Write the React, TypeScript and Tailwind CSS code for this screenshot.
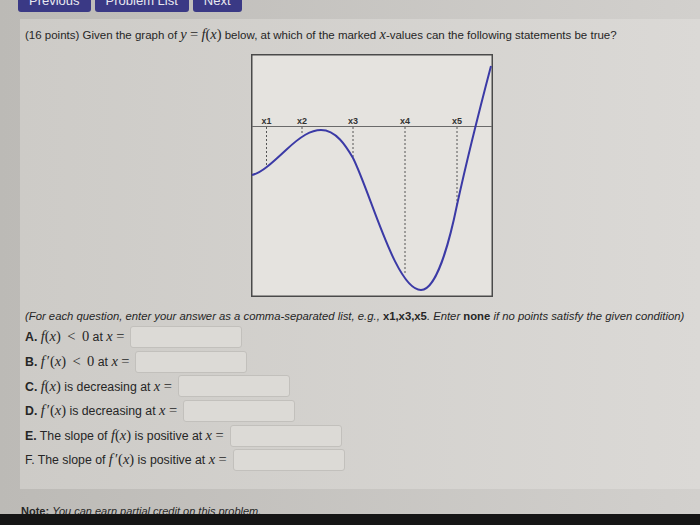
import React from 'react';

const M: React.FC<{ children: React.ReactNode }> = ({ children }) => (
  <span className="font-['Liberation_Serif',serif] italic text-[14.5px]">{children}</span>
);

const R: React.FC<{ children: React.ReactNode }> = ({ children }) => (
  <span className="font-['Liberation_Serif',serif] text-[14.5px]">{children}</span>
);

const Prime: React.FC = () => (
  <span className="ml-[2px] font-['Liberation_Serif',serif] text-[14.5px]">′</span>
);

const Lt: React.FC = () => (
  <span className="mx-[3px] font-['Liberation_Serif',serif] text-[14.5px]">&lt;</span>
);

const AnswerBox: React.FC = () => (
  <input
    type="text"
    className="ml-[6px] h-[22px] w-[112px] rounded-[3px] border border-[#c2c0bc] bg-[#dcdad6] outline-none"
  />
);

const Graph: React.FC = () => {
  const marks = [
    { label: 'x1', x: 15.5, y: 113 },
    { label: 'x2', x: 51, y: 81 },
    { label: 'x3', x: 102, y: 104 },
    { label: 'x4', x: 154, y: 221 },
    { label: 'x5', x: 206, y: 151 },
  ];
  return (
    <svg width="242" height="243" viewBox="0 0 242 243" className="block">
      <rect x="0.75" y="0.75" width="240.5" height="241.5" fill="#e5e3df" stroke="#4a4a4a" strokeWidth="1.5" />
      <line x1="1" y1="72.5" x2="241" y2="72.5" stroke="#6a6a6a" strokeWidth="1" />
      {marks.map((m) => (
        <g key={m.label}>
          <line x1={m.x} y1="73" x2={m.x} y2={m.y} stroke="#555" strokeWidth="1" strokeDasharray="2 2" />
          <text
            x={m.x}
            y="69.5"
            textAnchor="middle"
            fontSize="9"
            fontWeight="bold"
            fontFamily="'Liberation Sans', sans-serif"
            fill="#333"
          >
            {m.label}
          </text>
        </g>
      ))}
      <path
        d="M1 121 C10 119, 20 110, 35 96 C50 82, 60 76, 70 76 C85 76, 95 92, 102 104 C120 140, 145 236, 170 236 C185 236, 198 190, 206 151 C215 110, 230 50, 240 12"
        fill="none"
        stroke="#3b3aa6"
        strokeWidth="2"
      />
    </svg>
  );
};

export default function App() {
  const rows: { key: string; label: React.ReactNode }[] = [
    {
      key: 'A',
      label: (
        <>
          <b>A.</b> <M>f</M><R>(</R><M>x</M><R>)</R> <Lt /> <R>0</R> at <M>x</M> <R>=</R>
        </>
      ),
    },
    {
      key: 'B',
      label: (
        <>
          <b>B.</b> <M>f</M><Prime /><R>(</R><M>x</M><R>)</R> <Lt /> <R>0</R> at <M>x</M> <R>=</R>
        </>
      ),
    },
    {
      key: 'C',
      label: (
        <>
          <b>C.</b> <M>f</M><R>(</R><M>x</M><R>)</R> is decreasing at <M>x</M> <R>=</R>
        </>
      ),
    },
    {
      key: 'D',
      label: (
        <>
          <b>D.</b> <M>f</M><Prime /><R>(</R><M>x</M><R>)</R> is decreasing at <M>x</M> <R>=</R>
        </>
      ),
    },
    {
      key: 'E',
      label: (
        <>
          <b>E.</b> The slope of <M>f</M><R>(</R><M>x</M><R>)</R> is positive at <M>x</M> <R>=</R>
        </>
      ),
    },
    {
      key: 'F',
      label: (
        <>
          F. The slope of <M>f</M><Prime /><R>(</R><M>x</M><R>)</R> is positive at <M>x</M> <R>=</R>
        </>
      ),
    },
  ];

  return (
    <div className="flex h-[525px] w-[700px] flex-col overflow-hidden bg-linear-to-r from-[#bcbab6] to-[#d2d0cd] font-['Liberation_Sans',sans-serif] text-[#262626]">
      {/* nav buttons, cut off by the top of the photo */}
      <div className="-mt-[12px] flex gap-[4px] pl-[18px]">
        {['Previous', 'Problem List', 'Next'].map((b) => (
          <button
            key={b}
            className="h-[24px] rounded-[3px] bg-[#3a3985] px-[11px] pt-[2px] text-[13px] leading-[20px] text-[#e8e8f0]"
          >
            {b}
          </button>
        ))}
      </div>

      {/* problem panel */}
      <div className="ml-[20px] mt-[7px] h-[470px] bg-linear-to-r from-[#cdcbc7] to-[#dbd9d6] pl-[5px] pt-[8px]">
        <p className="text-[11.5px] leading-[14px]">
          (16 points) Given the graph of <M>y</M> <R>=</R> <M>f</M><R>(</R><M>x</M><R>)</R> below, at which of the marked{' '}
          <M>x</M>-values can the following statements be true?
        </p>

        <div className="ml-[226px] mt-[12px]">
          <Graph />
        </div>

        <p className="mt-[13px] text-[11.3px] italic leading-[13px]">
          (For each question, enter your answer as a comma-separated list, e.g., <b className="not-italic">x1,x3,x5</b>. Enter{' '}
          <b className="not-italic">none</b> if no points satisfy the given condition)
        </p>

        <div className="mt-[3px] flex flex-col gap-[2px]">
          {rows.map((r) => (
            <div key={r.key} className="flex h-[22.6px] items-center text-[12.3px]">
              <span className="whitespace-nowrap">{r.label}</span>
              <AnswerBox />
            </div>
          ))}
        </div>
      </div>

      <div className="ml-[21px] mt-[16px] h-[9px] overflow-hidden text-[11px] leading-[13px]">
        <b>Note:</b> <i className="underline">You can earn partial credit on this problem.</i>
      </div>
      <div className="flex-1 bg-[#151515]" />
    </div>
  );
}
